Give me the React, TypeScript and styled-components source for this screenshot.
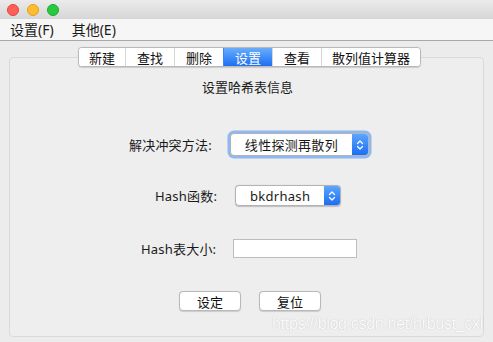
import React from "react";
import styled, { createGlobalStyle } from "styled-components";

const GlobalStyle = createGlobalStyle`
  html, body {
    margin: 0;
    padding: 0;
    background: #ececec;
  }
  * {
    box-sizing: border-box;
  }
`;

const FONT = `"Noto Sans", "Noto Sans CJK SC", sans-serif`;

const Window = styled.div`
  position: relative;
  width: 493px;
  height: 342px;
  display: flex;
  flex-direction: column;
  overflow: hidden;
  font-family: ${FONT};
  font-size: 13px;
  color: #1a1a1a;
  background: #ececec;
`;

const TitleBar = styled.div`
  height: 19px;
  display: flex;
  align-items: center;
  gap: 8px;
  padding-left: 7px;
  background: linear-gradient(#ebebeb, #d6d6d6);
`;

const Light = styled.span<{ $color: string; $edge: string }>`
  width: 12px;
  height: 12px;
  border-radius: 50%;
  background: ${(p) => p.$color};
  border: 0.5px solid ${(p) => p.$edge};
`;

const MenuBar = styled.div`
  height: 22px;
  display: flex;
  align-items: center;
  gap: 18px;
  padding-left: 10px;
  background: #f6f6f6;
  border-bottom: 1px solid #a8a8a8;
`;

const MenuItem = styled.span`
  font-size: 14px;
  line-height: 16px;
`;

const Content = styled.div`
  flex: 1;
  display: flex;
  flex-direction: column;
  padding: 6px 9px 5px;
`;

const TabBar = styled.div`
  position: relative;
  z-index: 1;
  align-self: center;
  display: flex;
  height: 20px;
  margin-bottom: -10px;
  margin-left: 6px;
  border: 1px solid #b9b9b9;
  border-radius: 4px;
  background: #fff;
  overflow: hidden;
  box-shadow: 0 0.5px 1px rgba(0, 0, 0, 0.15);
`;

const Tab = styled.div<{ $active?: boolean; $w: number }>`
  width: ${(p) => p.$w}px;
  display: flex;
  align-items: center;
  justify-content: center;
  font-size: 13px;
  border-left: 1px solid ${(p) => (p.$active ? "#3b84f6" : "#d6d6d6")};
  color: ${(p) => (p.$active ? "#fff" : "#111")};
  background: ${(p) =>
    p.$active ? "linear-gradient(#69adfb, #1b6ff4)" : "#fff"};

  &:first-child {
    border-left: none;
  }
`;

const Panel = styled.div`
  flex: 1;
  display: flex;
  flex-direction: column;
  align-items: stretch;
  border: 1px solid #dadada;
  border-radius: 4px;
  background: #eeeeee;
  padding-top: 20px;
`;

const Heading = styled.div`
  text-align: center;
  font-size: 13px;
  line-height: 18px;
  margin-left: 2px;
`;

const Row = styled.div<{ $indent: number; $top: number }>`
  display: flex;
  align-items: center;
  padding-left: ${(p) => p.$indent}px;
  margin-top: ${(p) => p.$top}px;
`;

const Label = styled.span<{ $gap: number }>`
  font-size: 13px;
  margin-right: ${(p) => p.$gap}px;
  letter-spacing: 0.2px;
`;

const Select = styled.div<{ $w: number; $h: number; $focus?: boolean }>`
  width: ${(p) => p.$w}px;
  height: ${(p) => p.$h}px;
  display: flex;
  align-items: stretch;
  border: 1px solid #b3b3b3;
  border-radius: 4px;
  background: #fff;
  overflow: hidden;
  box-shadow: ${(p) =>
    p.$focus
      ? "0 0 0 2.5px rgba(110, 165, 240, 0.75)"
      : "0 0.5px 1px rgba(0,0,0,0.2)"};
`;

const SelectText = styled.div`
  flex: 1;
  display: flex;
  align-items: center;
  justify-content: center;
  font-size: 13px;
  letter-spacing: 0.3px;
`;

const Arrow = styled.div`
  width: 16px;
  display: flex;
  align-items: center;
  justify-content: center;
  background: linear-gradient(#5ca6fb, #1a6ef4);
`;

const TextField = styled.div`
  width: 124px;
  height: 19px;
  background: #fff;
  border: 1px solid #bdbdbd;
`;

const Buttons = styled.div`
  display: flex;
  justify-content: center;
  gap: 18px;
  margin-top: 33px;
  margin-left: 7px;
`;

const Button = styled.button`
  width: 62px;
  height: 20px;
  padding: 0;
  font-family: ${FONT};
  font-size: 13px;
  color: #111;
  background: #fff;
  border: 1px solid #b9b9b9;
  border-radius: 4px;
  box-shadow: 0 0.5px 1px rgba(0, 0, 0, 0.15);
`;

const Watermark = styled.div`
  position: absolute;
  right: 10px;
  bottom: 9px;
  font-family: "Liberation Sans", Arial, sans-serif;
  font-size: 16px;
  letter-spacing: -0.3px;
  color: rgba(255, 255, 255, 0.95);
  text-shadow: 0 0 1px rgba(150, 150, 150, 0.6);
`;

const Chevrons = () => (
  <svg width="8" height="12" viewBox="0 0 8 12">
    <path
      d="M1.5 4.5 L4 2 L6.5 4.5 M1.5 7.5 L4 10 L6.5 7.5"
      fill="none"
      stroke="#fff"
      strokeWidth="1.3"
      strokeLinecap="round"
      strokeLinejoin="round"
    />
  </svg>
);

const tabs = [
  { label: "新建", w: 46 },
  { label: "查找", w: 49 },
  { label: "删除", w: 49 },
  { label: "设置", w: 49, active: true },
  { label: "查看", w: 49 },
  { label: "散列值计算器", w: 99 },
];

export default function App() {
  return (
    <>
      <GlobalStyle />
      <Window>
        <TitleBar>
          <Light $color="#fe5f57" $edge="#e0443e" />
          <Light $color="#febc2e" $edge="#dea123" />
          <Light $color="#28c840" $edge="#1aab29" />
        </TitleBar>
        <MenuBar>
          <MenuItem>设置(F)</MenuItem>
          <MenuItem>其他(E)</MenuItem>
        </MenuBar>
        <Content>
          <TabBar>
            {tabs.map((t) => (
              <Tab key={t.label} $w={t.w} $active={t.active}>
                {t.label}
              </Tab>
            ))}
          </TabBar>
          <Panel>
            <Heading>设置哈希表信息</Heading>
            <Row $indent={119} $top={37}>
              <Label $gap={18}>解决冲突方法:</Label>
              <Select $w={139} $h={23} $focus>
                <SelectText>线性探测再散列</SelectText>
                <Arrow>
                  <Chevrons />
                </Arrow>
              </Select>
            </Row>
            <Row $indent={145} $top={29}>
              <Label $gap={18}>Hash函数:</Label>
              <Select $w={106} $h={21}>
                <SelectText>bkdrhash</SelectText>
                <Arrow>
                  <Chevrons />
                </Arrow>
              </Select>
            </Row>
            <Row $indent={131} $top={33}>
              <Label $gap={17}>Hash表大小:</Label>
              <TextField />
            </Row>
            <Buttons>
              <Button>设定</Button>
              <Button>复位</Button>
            </Buttons>
          </Panel>
        </Content>
        <Watermark>https://blog.csdn.net/hrbust_cxl</Watermark>
      </Window>
    </>
  );
}
